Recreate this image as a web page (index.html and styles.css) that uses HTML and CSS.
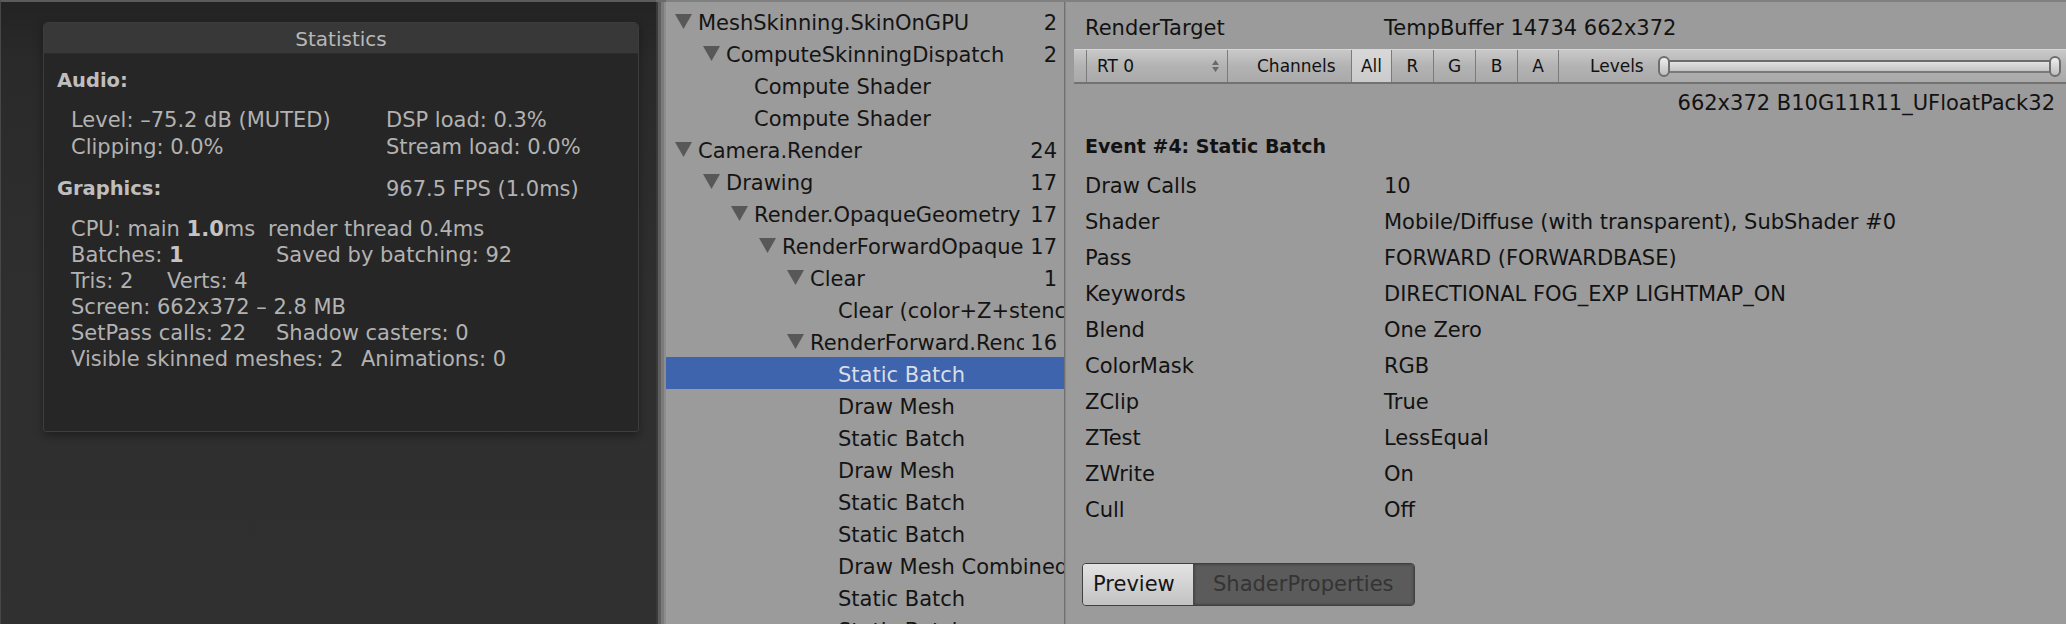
FILE: index.html
```html
<!DOCTYPE html>
<html>
<head>
<meta charset="utf-8">
<link rel="stylesheet" href="styles.css">
</head>
<body>
<div class="app">
  <section class="game">
    <div class="stats">
      <div class="stats-title">Statistics</div>
      <div class="stats-body">
        <div class="sh"><span class="sh-l">Audio:</span></div>
        <div class="audio">
          <div class="ar"><span class="c1">Level: –75.2 dB (MUTED)</span><span>DSP load: 0.3%</span></div>
          <div class="ar"><span class="c1">Clipping: 0.0%</span><span>Stream load: 0.0%</span></div>
        </div>
        <div class="sh gfx"><span class="sh-l">Graphics:</span><span class="fps">967.5 FPS (1.0ms)</span></div>
        <div class="glines">
          <div class="gl"><span class="w-cpu">CPU: main <b>1.0</b>ms</span><span>render thread 0.4ms</span></div>
          <div class="gl"><span class="w-bat">Batches: <b>1</b></span><span>Saved by batching: 92</span></div>
          <div class="gl"><span class="w-tri">Tris: 2</span><span>Verts: 4</span></div>
          <div class="gl"><span>Screen: 662x372 – 2.8 MB</span></div>
          <div class="gl"><span class="w-bat">SetPass calls: 22</span><span>Shadow casters: 0</span></div>
          <div class="gl"><span class="w-vis">Visible skinned meshes: 2</span><span>Animations: 0</span></div>
        </div>
      </div>
    </div>
  </section>

  <div class="splitter"></div>

  <section class="tree">
    <div class="row l0"><span class="tri"><svg width="17" height="15" viewBox="0 0 17 15"><path d="M0 0H17L8.5 15Z"/></svg></span><span class="lbl">MeshSkinning.SkinOnGPU</span><span class="cnt">2</span></div>
    <div class="row l1"><span class="tri"><svg width="17" height="15" viewBox="0 0 17 15"><path d="M0 0H17L8.5 15Z"/></svg></span><span class="lbl">ComputeSkinningDispatch</span><span class="cnt">2</span></div>
    <div class="row l2 leaf"><span class="lbl">Compute Shader</span></div>
    <div class="row l2 leaf"><span class="lbl">Compute Shader</span></div>
    <div class="row l0"><span class="tri"><svg width="17" height="15" viewBox="0 0 17 15"><path d="M0 0H17L8.5 15Z"/></svg></span><span class="lbl">Camera.Render</span><span class="cnt">24</span></div>
    <div class="row l1"><span class="tri"><svg width="17" height="15" viewBox="0 0 17 15"><path d="M0 0H17L8.5 15Z"/></svg></span><span class="lbl">Drawing</span><span class="cnt">17</span></div>
    <div class="row l2"><span class="tri"><svg width="17" height="15" viewBox="0 0 17 15"><path d="M0 0H17L8.5 15Z"/></svg></span><span class="lbl">Render.OpaqueGeometry</span><span class="cnt">17</span></div>
    <div class="row l3"><span class="tri"><svg width="17" height="15" viewBox="0 0 17 15"><path d="M0 0H17L8.5 15Z"/></svg></span><span class="lbl">RenderForwardOpaque.Render</span><span class="cnt">17</span></div>
    <div class="row l4"><span class="tri"><svg width="17" height="15" viewBox="0 0 17 15"><path d="M0 0H17L8.5 15Z"/></svg></span><span class="lbl">Clear</span><span class="cnt">1</span></div>
    <div class="row l5 leaf"><span class="lbl">Clear (color+Z+stencil)</span></div>
    <div class="row l4"><span class="tri"><svg width="17" height="15" viewBox="0 0 17 15"><path d="M0 0H17L8.5 15Z"/></svg></span><span class="lbl">RenderForward.RenderLoopJob</span><span class="cnt">16</span></div>
    <div class="row l5 leaf sel"><span class="lbl">Static Batch</span></div>
    <div class="row l5 leaf"><span class="lbl">Draw Mesh</span></div>
    <div class="row l5 leaf"><span class="lbl">Static Batch</span></div>
    <div class="row l5 leaf"><span class="lbl">Draw Mesh</span></div>
    <div class="row l5 leaf"><span class="lbl">Static Batch</span></div>
    <div class="row l5 leaf"><span class="lbl">Static Batch</span></div>
    <div class="row l5 leaf"><span class="lbl">Draw Mesh Combined</span></div>
    <div class="row l5 leaf"><span class="lbl">Static Batch</span></div>
    <div class="row l5 leaf"><span class="lbl">Static Batch</span></div>
  </section>

  <div class="vsep"></div>

  <section class="details">
    <div class="kv top"><span class="k">RenderTarget</span><span class="v">TempBuffer 14734 662x372</span></div>
    <div class="toolbar">
      <div class="tb-cap"></div>
      <div class="tb-popup"><span>RT 0</span><svg class="updown" width="7" height="12" viewBox="0 0 7 12"><path d="M0 5L3.5 0L7 5Z M0 7L3.5 12L7 7Z"/></svg></div>
      <div class="tb-label">Channels</div>
      <div class="tb-btn on w-all">All</div>
      <div class="tb-btn w-r">R</div>
      <div class="tb-btn w-g">G</div>
      <div class="tb-btn w-b">B</div>
      <div class="tb-btn w-a">A</div>
      <div class="tb-label lv">Levels</div>
      <div class="slider"><span class="thumb"></span><span class="track"></span><span class="thumb"></span></div>
    </div>
    <div class="fmt">662x372 B10G11R11_UFloatPack32</div>
    <div class="evt">Event #4: Static Batch</div>
    <div class="table">
      <div class="kv"><span class="k">Draw Calls</span><span class="v">10</span></div>
      <div class="kv"><span class="k">Shader</span><span class="v">Mobile/Diffuse (with transparent), SubShader #0</span></div>
      <div class="kv"><span class="k">Pass</span><span class="v">FORWARD (FORWARDBASE)</span></div>
      <div class="kv"><span class="k">Keywords</span><span class="v">DIRECTIONAL FOG_EXP LIGHTMAP_ON</span></div>
      <div class="kv"><span class="k">Blend</span><span class="v">One Zero</span></div>
      <div class="kv"><span class="k">ColorMask</span><span class="v">RGB</span></div>
      <div class="kv"><span class="k">ZClip</span><span class="v">True</span></div>
      <div class="kv"><span class="k">ZTest</span><span class="v">LessEqual</span></div>
      <div class="kv"><span class="k">ZWrite</span><span class="v">On</span></div>
      <div class="kv"><span class="k">Cull</span><span class="v">Off</span></div>
    </div>
    <div class="seg"><span class="seg-on">Preview</span><span class="seg-off">ShaderProperties</span></div>
  </section>
</div>
</body>
</html>
```

FILE: styles.css
```css
* { box-sizing: border-box; }
html, body { margin: 0; padding: 0; }
body {
  width: 2066px;
  height: 624px;
  overflow: hidden;
  background: #9b9b9b;
  font-family: "DejaVu Sans", "Lucida Grande", sans-serif;
}
.app {
  display: flex;
  width: 2066px;
  height: 624px;
}

/* ---------- game view / statistics ---------- */
.game {
  flex: none;
  width: 656px;
  height: 624px;
  border-left: 1px solid #474747;
  border-top: 2px solid #5b5b5b;
  background: linear-gradient(#232323 0, #2a2a2a 60px, #2f2f2f 300px, #303030 100%);
  padding: 20px 0 0 42px;
}
.stats {
  width: 596px;
  height: 410px;
  border: 1px solid #3d3d3d;
  border-radius: 5px 5px 3px 3px;
  background: #262626;
  box-shadow: 0 4px 10px rgba(0, 0, 0, 0.35);
  overflow: hidden;
}
.stats-title {
  height: 31px;
  line-height: 30px;
  padding-top: 1px;
  background: #383838;
  border-bottom: 1px solid #2c2c2c;
  color: #b8b8b8;
  text-align: center;
  font-size: 20px;
}
.stats-body {
  padding: 14px 0 0 13px;
  color: #b2b2b2;
  font-size: 21px;
}
.sh {
  display: flex;
  height: 26px;
  line-height: 26px;
}
.sh-l {
  width: 329px;
  font-weight: bold;
  font-size: 19.5px;
  color: #bebebe;
}
.gfx { margin-top: 15px; }
.audio {
  margin-top: 13px;
  padding-left: 14px;
}
.ar {
  display: flex;
  height: 27px;
  line-height: 27px;
  white-space: nowrap;
}
.ar .c1 { width: 315px; }
.glines {
  margin-top: 14px;
  padding-left: 14px;
}
.gl {
  display: flex;
  height: 26px;
  line-height: 26px;
  white-space: nowrap;
}
.gl b { color: #c4c4c4; }
.w-cpu { width: 197px; }
.w-bat { width: 205px; }
.w-tri { width: 96px; }
.w-vis { width: 290px; }

.splitter {
  flex: none;
  width: 10px;
  border-top: 2px solid #6a6a6a;
  background: linear-gradient(to right, #3a3a3a 0, #3a3a3a 2px, #5f5f5f 2px, #5f5f5f 5px, #7b7b7b 5px, #7b7b7b 8px, #8d8d8d 8px);
}

/* ---------- event tree ---------- */
.tree {
  flex: none;
  width: 398px;
  height: 624px;
  overflow: hidden;
  background: #9b9b9b;
  border-top: 2px solid #808080;
  padding-top: 3px;
}
.row {
  display: flex;
  align-items: center;
  height: 32px;
  padding-top: 3px;
  font-size: 21px;
  color: #141414;
  white-space: nowrap;
}
.row .tri {
  flex: none;
  width: 17px;
  height: 15px;
  margin-right: 6px;
  margin-top: -3px;
  display: flex;
}
.row .tri svg { fill: #585858; }
.row .lbl {
  flex: 1;
  min-width: 0;
  overflow: hidden;
}
.row .cnt {
  flex: none;
  width: 40px;
  padding-right: 7px;
  text-align: right;
}
.l0 { padding-left: 9px; }
.l1 { padding-left: 37px; }
.l2 { padding-left: 65px; }
.l3 { padding-left: 93px; }
.l4 { padding-left: 121px; }
.l5 { padding-left: 149px; }
.l2.leaf { padding-left: 88px; }
.l5.leaf { padding-left: 172px; }
.row.sel {
  background: #3e64ad;
  color: #d9dde6;
}

.vsep {
  flex: none;
  width: 2px;
  border-top: 2px solid #808080;
  background: linear-gradient(to right, #717171 0, #717171 1px, #8a8a8a 1px);
}

/* ---------- details ---------- */
.details {
  flex: 1;
  height: 624px;
  overflow: hidden;
  border-top: 2px solid #808080;
  padding: 8px 0 0 19px;
  color: #121212;
  font-size: 21px;
}
.kv {
  display: flex;
  height: 36px;
  line-height: 36px;
  white-space: nowrap;
}
.kv .k { width: 299px; flex: none; }
.toolbar {
  display: flex;
  align-items: stretch;
  height: 35px;
  margin: 3px 0 0 -11px;
  background: linear-gradient(#c9c9c9, #b3b3b3 50%, #a9a9a9);
  border-top: 1px solid #d6d6d6;
  border-bottom: 2px solid #727272;
  font-size: 17px;
  color: #111;
}
.tb-cap {
  width: 13px;
  border-right: 1px solid #7b7b7b;
}
.tb-popup {
  width: 141px;
  display: flex;
  align-items: center;
  padding-left: 10px;
  border-right: 1px solid #7b7b7b;
}
.tb-popup .updown {
  margin-left: auto;
  margin-right: 8px;
  fill: #6a6a6a;
}
.tb-label {
  width: 123px;
  display: flex;
  align-items: center;
  padding-left: 29px;
}
.tb-label.lv {
  width: auto;
  padding-left: 31px;
}
.tb-btn {
  display: flex;
  align-items: center;
  justify-content: center;
  border-right: 1px solid #7b7b7b;
}
.tb-btn.on {
  background: linear-gradient(#d8d8d8, #cbcbcb);
  border-left: 1px solid #7b7b7b;
}
.w-all { width: 41px; }
.w-r { width: 42px; }
.w-g { width: 42px; }
.w-b { width: 42px; }
.w-a { width: 41px; }
.slider {
  flex: 1;
  display: flex;
  align-items: center;
  margin: 0 5px 0 14px;
}
.slider .track {
  flex: 1;
  height: 13px;
  margin: 0 -5px;
  border-top: 2px solid #6c6c6c;
  border-bottom: 2px solid #7a7a7a;
  background: linear-gradient(#e2e2e2, #c4c4c4);
}
.slider .thumb {
  position: relative;
  z-index: 1;
  flex: none;
  width: 12px;
  height: 21px;
  border: 2px solid #6e6e6e;
  border-radius: 6px;
  background: linear-gradient(#eeeeee, #bdbdbd);
}
.fmt {
  margin-top: 4px;
  height: 30px;
  line-height: 30px;
  text-align: right;
  padding-right: 11px;
}
.evt {
  margin-top: 10px;
  height: 36px;
  line-height: 36px;
  font-weight: bold;
  font-size: 19px;
}
.table { margin-top: 4px; }
.seg {
  display: inline-flex;
  margin: 35px 0 0 -3px;
  height: 43px;
  border: 1px solid #404040;
  border-radius: 4px;
  overflow: hidden;
  line-height: 41px;
}
.seg-on {
  width: 111px;
  padding-left: 10px;
  background: linear-gradient(#e3e3e3, #c2c2c2);
  color: #151515;
  border-right: 1px solid #4a4a4a;
}
.seg-off {
  padding: 0 20px 0 19px;
  background: #5b5b5b;
  box-shadow: inset 0 0 3px rgba(0, 0, 0, 0.45);
  color: #343434;
}
```
